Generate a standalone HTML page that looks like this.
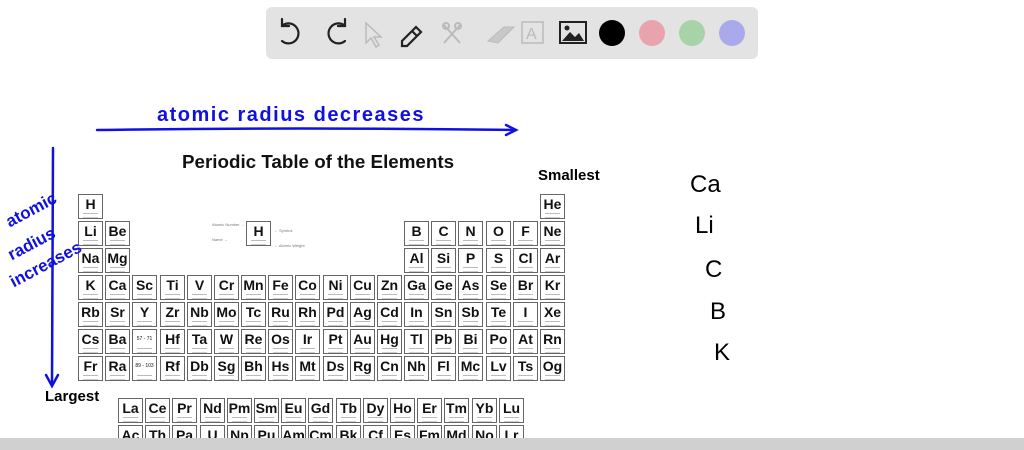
<!DOCTYPE html>
<html><head><meta charset="utf-8"><style>
body{margin:0;width:1024px;height:450px;overflow:hidden;background:#fff;position:relative;font-family:"Liberation Sans",sans-serif}
.c{position:absolute;width:23px;height:23px;border:1px solid #666;box-sizing:content-box;text-align:center;font-weight:bold;font-size:14px;line-height:18px;color:#111}
.c:after{content:"";position:absolute;left:4px;right:4px;top:18px;height:3px;border-top:1px solid #bbb;border-bottom:1px solid #ccc}
.hw{position:absolute;font-family:"Liberation Sans",sans-serif;color:#1010e0;font-size:19px;white-space:nowrap;font-weight:bold}
.k{position:absolute;color:#000;font-size:24px}
</style></head><body>
<div style="position:absolute;left:266px;top:7px;width:492px;height:52px;background:#e3e3e3;border-radius:6px"></div>
<svg style="position:absolute;left:266px;top:7px" width="492" height="52" viewBox="0 0 492 52">
<g fill="none" stroke="#222" stroke-width="2.2" stroke-linecap="round">
<path d="M17 18 A10 10 0 1 1 16 34"/><path d="M16 12 V19 H23"/>
<path d="M78 18 A10 10 0 1 0 79 34"/><path d="M79 12 V19 H72"/>
<path d="M136 34 L150 20 L155 25 L141 39 H136 Z M146 24 L151 29"/>
</g>
<path d="M100 16 L100 36 L105 31 L110 40 L113 38 L108 30 L115 30 Z" fill="none" stroke="#bbb" stroke-width="1.5"/>
<g stroke="#bbb" stroke-width="2" fill="none"><path d="M178 18 L194 36 M194 18 L178 36"/><circle cx="180" cy="19" r="3"/><circle cx="192" cy="19" r="3"/></g>
<path d="M222 34 L238 20 L248 20 L232 36 Z" fill="#c8c8c8" stroke="#bbb"/>
<rect x="256" y="15" width="21" height="21" fill="none" stroke="#bbb" stroke-width="1.5"/><text x="260" y="32" font-size="16" fill="#bbb" font-family="Liberation Sans">A</text>
<rect x="294" y="15" width="26" height="21" fill="none" stroke="#222" stroke-width="2"/><circle cx="301" cy="21" r="2.5" fill="#222"/><path d="M296 34 L304 25 L309 30 L313 26 L318 34 Z" fill="#222"/>
<circle cx="346" cy="26" r="13" fill="#000"/><circle cx="386" cy="26" r="13" fill="#e8a3ad"/><circle cx="426" cy="26" r="13" fill="#a8d3a8"/><circle cx="466" cy="26" r="13" fill="#a9a9ec"/>
</svg>

<div style="position:absolute;left:182px;top:151px;font-weight:bold;font-size:18.8px;color:#111">Periodic Table of the Elements</div>

<div class="c" style="left:78px;top:194px">H</div><div class="c" style="left:540px;top:194px">He</div>
<div class="c" style="left:78px;top:221px">Li</div><div class="c" style="left:105px;top:221px">Be</div>
<div class="c" style="left:404px;top:221px">B</div><div class="c" style="left:431px;top:221px">C</div><div class="c" style="left:458px;top:221px">N</div><div class="c" style="left:486px;top:221px">O</div><div class="c" style="left:513px;top:221px">F</div><div class="c" style="left:540px;top:221px">Ne</div>
<div class="c" style="left:78px;top:248px">Na</div><div class="c" style="left:105px;top:248px">Mg</div>
<div class="c" style="left:404px;top:248px">Al</div><div class="c" style="left:431px;top:248px">Si</div><div class="c" style="left:458px;top:248px">P</div><div class="c" style="left:486px;top:248px">S</div><div class="c" style="left:513px;top:248px">Cl</div><div class="c" style="left:540px;top:248px">Ar</div>
<div class="c" style="left:246px;top:221px">H</div>
<div style="position:absolute;left:212px;top:222px;font-size:4px;color:#777">Atomic Number →<br><br><br>Name →</div>
<div style="position:absolute;left:274px;top:228px;font-size:4px;color:#777">← Symbol<br><br><br>← Atomic Weight</div>

<div class="c" style="left:78px;top:275px">K</div><div class="c" style="left:105px;top:275px">Ca</div><div class="c" style="left:132px;top:275px">Sc</div><div class="c" style="left:160px;top:275px">Ti</div><div class="c" style="left:187px;top:275px">V</div><div class="c" style="left:214px;top:275px">Cr</div><div class="c" style="left:241px;top:275px">Mn</div><div class="c" style="left:268px;top:275px">Fe</div><div class="c" style="left:295px;top:275px">Co</div><div class="c" style="left:323px;top:275px">Ni</div><div class="c" style="left:350px;top:275px">Cu</div><div class="c" style="left:377px;top:275px">Zn</div><div class="c" style="left:404px;top:275px">Ga</div><div class="c" style="left:431px;top:275px">Ge</div><div class="c" style="left:458px;top:275px">As</div><div class="c" style="left:486px;top:275px">Se</div><div class="c" style="left:513px;top:275px">Br</div><div class="c" style="left:540px;top:275px">Kr</div>
<div class="c" style="left:78px;top:302px">Rb</div><div class="c" style="left:105px;top:302px">Sr</div><div class="c" style="left:132px;top:302px">Y</div><div class="c" style="left:160px;top:302px">Zr</div><div class="c" style="left:187px;top:302px">Nb</div><div class="c" style="left:214px;top:302px">Mo</div><div class="c" style="left:241px;top:302px">Tc</div><div class="c" style="left:268px;top:302px">Ru</div><div class="c" style="left:295px;top:302px">Rh</div><div class="c" style="left:323px;top:302px">Pd</div><div class="c" style="left:350px;top:302px">Ag</div><div class="c" style="left:377px;top:302px">Cd</div><div class="c" style="left:404px;top:302px">In</div><div class="c" style="left:431px;top:302px">Sn</div><div class="c" style="left:458px;top:302px">Sb</div><div class="c" style="left:486px;top:302px">Te</div><div class="c" style="left:513px;top:302px">I</div><div class="c" style="left:540px;top:302px">Xe</div>
<div class="c" style="left:78px;top:329px">Cs</div><div class="c" style="left:105px;top:329px">Ba</div><div class="c" style="left:132px;top:329px;font-size:5px;font-weight:normal">57 - 71</div><div class="c" style="left:160px;top:329px">Hf</div><div class="c" style="left:187px;top:329px">Ta</div><div class="c" style="left:214px;top:329px">W</div><div class="c" style="left:241px;top:329px">Re</div><div class="c" style="left:268px;top:329px">Os</div><div class="c" style="left:295px;top:329px">Ir</div><div class="c" style="left:323px;top:329px">Pt</div><div class="c" style="left:350px;top:329px">Au</div><div class="c" style="left:377px;top:329px">Hg</div><div class="c" style="left:404px;top:329px">Tl</div><div class="c" style="left:431px;top:329px">Pb</div><div class="c" style="left:458px;top:329px">Bi</div><div class="c" style="left:486px;top:329px">Po</div><div class="c" style="left:513px;top:329px">At</div><div class="c" style="left:540px;top:329px">Rn</div>
<div class="c" style="left:78px;top:356px">Fr</div><div class="c" style="left:105px;top:356px">Ra</div><div class="c" style="left:132px;top:356px;font-size:5px;font-weight:normal">89 - 103</div><div class="c" style="left:160px;top:356px">Rf</div><div class="c" style="left:187px;top:356px">Db</div><div class="c" style="left:214px;top:356px">Sg</div><div class="c" style="left:241px;top:356px">Bh</div><div class="c" style="left:268px;top:356px">Hs</div><div class="c" style="left:295px;top:356px">Mt</div><div class="c" style="left:323px;top:356px">Ds</div><div class="c" style="left:350px;top:356px">Rg</div><div class="c" style="left:377px;top:356px">Cn</div><div class="c" style="left:404px;top:356px">Nh</div><div class="c" style="left:431px;top:356px">Fl</div><div class="c" style="left:458px;top:356px">Mc</div><div class="c" style="left:486px;top:356px">Lv</div><div class="c" style="left:513px;top:356px">Ts</div><div class="c" style="left:540px;top:356px">Og</div>

<div class="c" style="left:118px;top:398px">La</div><div class="c" style="left:145px;top:398px">Ce</div><div class="c" style="left:172px;top:398px">Pr</div><div class="c" style="left:200px;top:398px">Nd</div><div class="c" style="left:227px;top:398px">Pm</div><div class="c" style="left:254px;top:398px">Sm</div><div class="c" style="left:281px;top:398px">Eu</div><div class="c" style="left:308px;top:398px">Gd</div><div class="c" style="left:336px;top:398px">Tb</div><div class="c" style="left:363px;top:398px">Dy</div><div class="c" style="left:390px;top:398px">Ho</div><div class="c" style="left:417px;top:398px">Er</div><div class="c" style="left:444px;top:398px">Tm</div><div class="c" style="left:472px;top:398px">Yb</div><div class="c" style="left:499px;top:398px">Lu</div>
<div class="c" style="left:118px;top:425px">Ac</div><div class="c" style="left:145px;top:425px">Th</div><div class="c" style="left:172px;top:425px">Pa</div><div class="c" style="left:200px;top:425px">U</div><div class="c" style="left:227px;top:425px">Np</div><div class="c" style="left:254px;top:425px">Pu</div><div class="c" style="left:281px;top:425px">Am</div><div class="c" style="left:308px;top:425px">Cm</div><div class="c" style="left:336px;top:425px">Bk</div><div class="c" style="left:363px;top:425px">Cf</div><div class="c" style="left:390px;top:425px">Es</div><div class="c" style="left:417px;top:425px">Fm</div><div class="c" style="left:444px;top:425px">Md</div><div class="c" style="left:472px;top:425px">No</div><div class="c" style="left:499px;top:425px">Lr</div>

<div style="position:absolute;left:0;top:438px;width:1024px;height:12px;background:#d0d0d0"></div>

<svg style="position:absolute;left:0;top:0" width="1024" height="450">
<g fill="none" stroke="#1010e0" stroke-width="2.5" stroke-linecap="round">
<path d="M97 130 Q300 127 515 130"/><path d="M506 125 L516 130 L506 135"/>
<path d="M53 148 L52 385"/><path d="M46 375 L52 386 L58 375"/>
</g></svg>
<div class="hw" style="left:157px;top:104px;font-size:20px;letter-spacing:1.5px">atomic radius decreases</div>
<div class="hw" style="left:12px;top:212px;transform:rotate(-28deg);transform-origin:left bottom;font-size:17px">atomic</div>
<div class="hw" style="left:14px;top:245px;transform:rotate(-28deg);transform-origin:left bottom;font-size:17px">radius</div>
<div class="hw" style="left:16px;top:272px;transform:rotate(-28deg);transform-origin:left bottom;font-size:17px">increases</div>
<div class="k" style="left:45px;top:388px;font-size:15px;font-weight:bold">Largest</div>
<div class="k" style="left:538px;top:167px;font-size:15px;font-weight:bold">Smallest</div>
<div class="k" style="left:690px;top:171px">Ca</div>
<div class="k" style="left:695px;top:212px">Li</div>
<div class="k" style="left:705px;top:256px">C</div>
<div class="k" style="left:710px;top:298px">B</div>
<div class="k" style="left:714px;top:339px">K</div>
</body></html>
